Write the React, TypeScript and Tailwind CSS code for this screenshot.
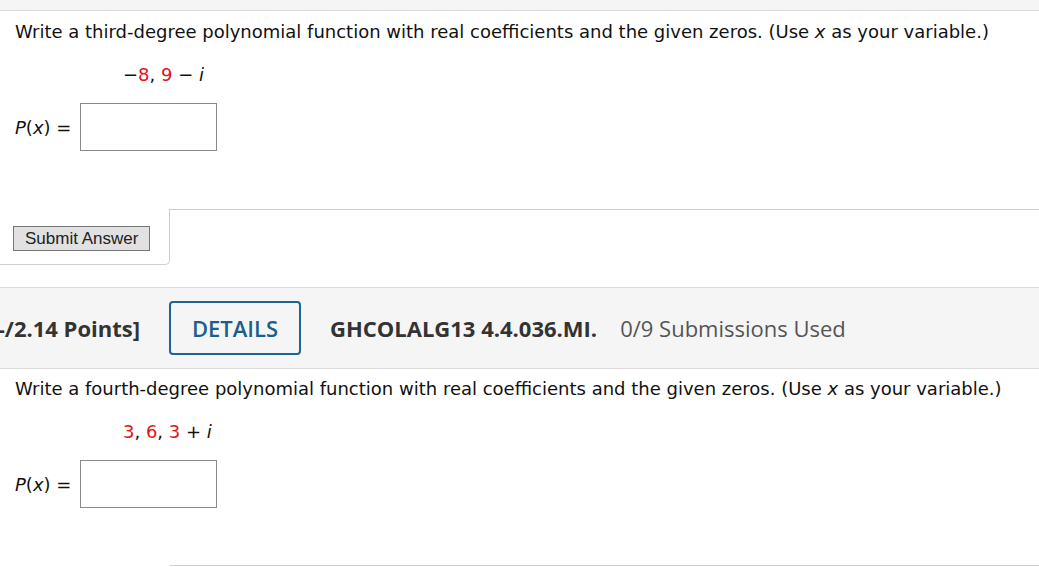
import React from 'react';

const verdana = { fontFamily: '"DejaVu Sans", Verdana, sans-serif' };

function Zeros({ children }: { children: React.ReactNode }) {
  return <div className="pl-[123px] h-[20px] leading-[20px] text-[18px] text-[#111]">{children}</div>;
}

function AnswerRow() {
  return (
    <div className="flex items-center pl-[15px] h-[48px]">
      <span className="text-[18px] text-[#111] w-[65px]">
        <i>P</i>(<i>x</i>) =
      </span>
      <div className="w-[137px] h-[48px] border border-[#8a8a8a] bg-white" />
    </div>
  );
}

export default function App() {
  const red = 'text-[#e0131a]';
  return (
    <div className="w-[1039px] h-[567px] overflow-hidden bg-white" style={verdana}>
      {/* top strip */}
      <div className="h-[11px] bg-[#f5f5f5] border-b border-[#dcdcdc]" />

      {/* question 1 */}
      <div className="pt-[10px] pl-[15px] h-[21px] leading-[21px] text-[18px] text-[#111] box-content whitespace-nowrap">
        Write a third-degree polynomial function with real coefficients and the given zeros. (Use <i>x</i> as your variable.)
      </div>
      <div className="h-[23px]" />
      <Zeros>
        −<span className={red}>8</span>, <span className={red}>9</span> − <i>i</i>
      </Zeros>
      <div className="h-[18px]" />
      <AnswerRow />

      {/* submit area */}
      <div className="h-[58px]" />
      <div className="flex h-[56px]">
        <div className="w-[170px] shrink-0 border-r border-b border-[#cfcfcf] rounded-br-[5px] flex items-center pl-[13px] pt-[4px]">
          <button
            className="h-[25px] px-[11px] bg-[#e1e1e1] border border-[#767676] text-[#222] text-[17px] leading-none"
            style={{ fontFamily: '"Liberation Sans", Arial, sans-serif' }}
          >
            Submit Answer
          </button>
        </div>
        <div className="flex-1 border-t border-[#cfcfcf]" />
      </div>

      {/* header band */}
      <div className="h-[22px]" />
      <div
        className="h-[82px] bg-[#f5f5f5] border-y border-[#dcdcdc] flex items-center whitespace-nowrap"
        style={{ fontFamily: '"Open Sans", sans-serif' }}
      >
        <div className="w-[140px] shrink-0 flex justify-end overflow-hidden">
          <span className="text-[22px] font-bold text-[#333]">-/2.14 Points]</span>
        </div>
        <div className="ml-[29px] w-[132px] h-[54px] shrink-0 border-2 border-[#1b6594] rounded-[4px] flex items-center justify-center text-[22px] font-semibold text-[#1b5f8d]">
          DETAILS
        </div>
        <span className="ml-[29px] text-[22px] font-bold text-[#333]">GHCOLALG13 4.4.036.MI.</span>
        <span className="ml-[23px] text-[22px] text-[#555]">0/9 Submissions Used</span>
      </div>

      {/* question 2 */}
      <div className="pt-[9px] pl-[15px] h-[21px] leading-[21px] text-[18px] text-[#111] box-content whitespace-nowrap">
        Write a fourth-degree polynomial function with real coefficients and the given zeros. (Use <i>x</i> as your variable.)
      </div>
      <div className="h-[23px]" />
      <Zeros>
        <span className={red}>3</span>, <span className={red}>6</span>, <span className={red}>3</span> + <i>i</i>
      </Zeros>
      <div className="h-[18px]" />
      <AnswerRow />
      <div className="h-[57px]" />
      <div className="ml-[170px] border-t border-[#cfcfcf]" />
    </div>
  );
}
